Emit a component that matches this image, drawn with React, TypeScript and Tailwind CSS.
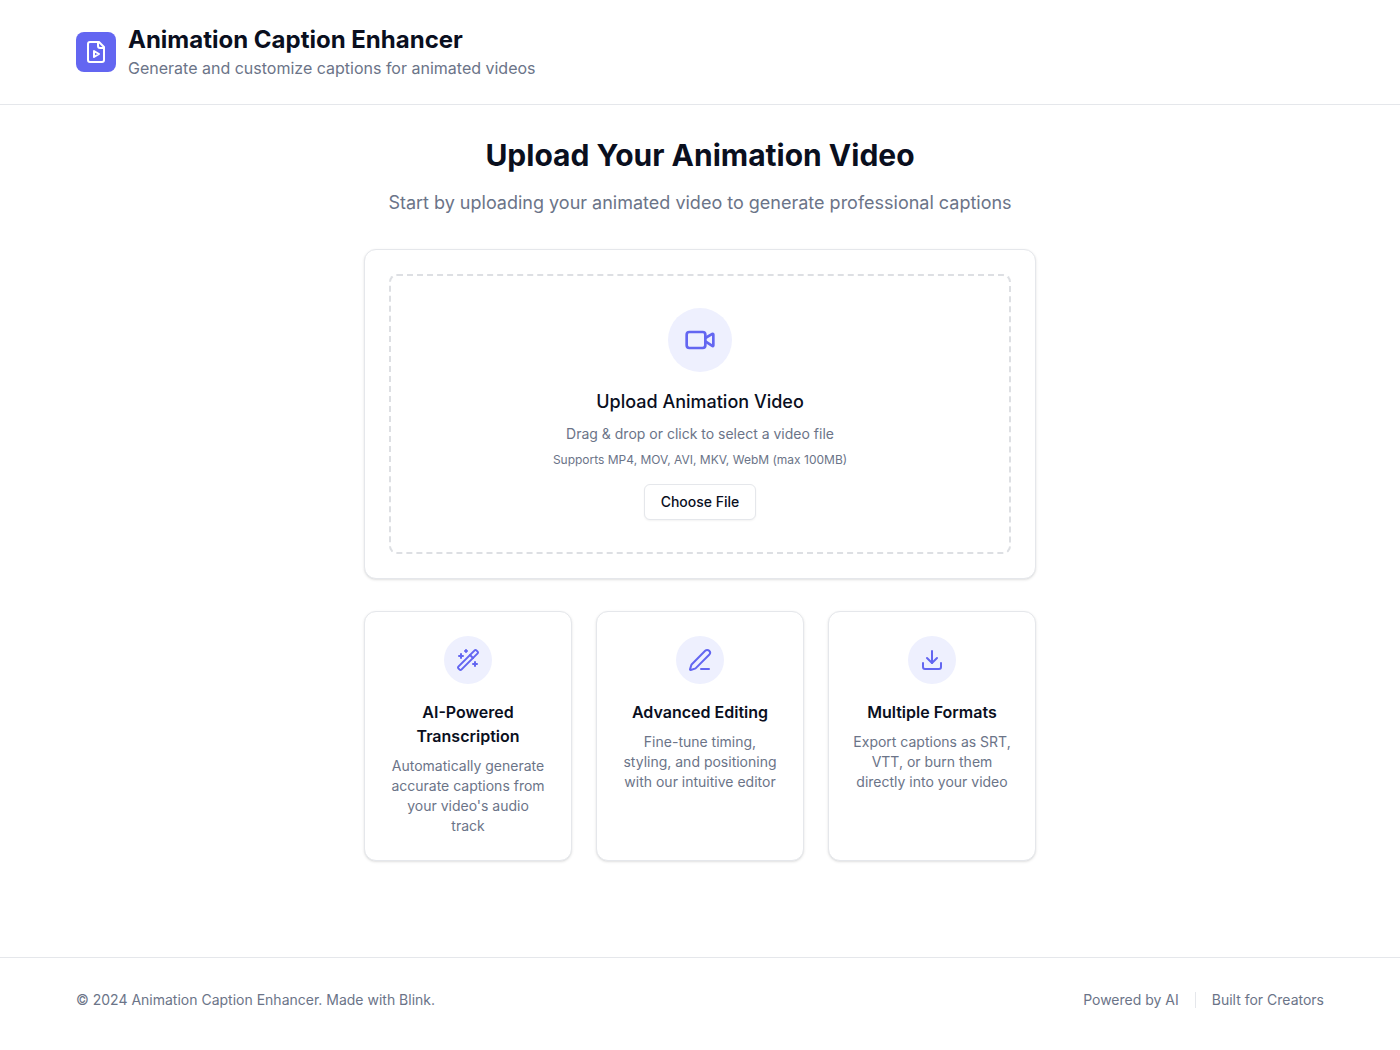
import { Download, PenLine, Video, WandSparkles } from "lucide-react";

const features = [
  {
    title: "AI-Powered Transcription",
    description: "Automatically generate accurate captions from your video's audio track",
    icon: <WandSparkles className="w-6 h-6 text-[#6366f1]" strokeWidth={2} />,
  },
  {
    title: "Advanced Editing",
    description: "Fine-tune timing, styling, and positioning with our intuitive editor",
    icon: <PenLine className="w-6 h-6 text-[#6366f1]" strokeWidth={2} />,
  },
  {
    title: "Multiple Formats",
    description: "Export captions as SRT, VTT, or burn them directly into your video",
    icon: <Download className="w-6 h-6 text-[#6366f1]" strokeWidth={2} />,
  },
];

export default function App() {
  return (
    <div className="min-h-screen bg-white text-[#0a0f1e] antialiased font-['Inter',sans-serif]">
      <header className="border-b border-[#e5e7eb]">
        <div className="max-w-[1280px] mx-auto px-4 py-6 flex items-center gap-3">
          <div className="w-10 h-10 rounded-lg bg-[#6366f1] flex items-center justify-center">
            <svg
              viewBox="0 0 24 24"
              className="w-6 h-6 text-white"
              fill="none"
              stroke="currentColor"
              strokeWidth={2}
              strokeLinecap="round"
              strokeLinejoin="round"
            >
              <path d="M15 2H6a2 2 0 0 0-2 2v16a2 2 0 0 0 2 2h12a2 2 0 0 0 2-2V7Z" />
              <path d="M14 2v4a2 2 0 0 0 2 2h4" />
              <path d="m10 11 5 3-5 3v-6Z" />
            </svg>
          </div>
          <div>
            <h1 className="text-2xl font-bold">Animation Caption Enhancer</h1>
            <p className="text-base text-[#6b7488]">Generate and customize captions for animated videos</p>
          </div>
        </div>
      </header>

      <main className="max-w-[704px] mx-auto px-4 pt-8 pb-8 mb-16">
        <div className="text-center mb-8">
          <h2 className="text-3xl font-bold mb-4">Upload Your Animation Video</h2>
          <p className="text-lg text-[#6b7488]">Start by uploading your animated video to generate professional captions</p>
        </div>

        <div className="bg-white border border-[#e5e7eb] rounded-xl shadow-sm p-6 mb-8">
          <div className="border-2 border-dashed border-[#dddfe3] rounded-lg p-8 text-center">
            <div className="w-16 h-16 rounded-full bg-[#eef0fe] flex items-center justify-center mx-auto mb-4">
              <Video className="w-8 h-8 text-[#6366f1]" strokeWidth={2} />
            </div>
            <h3 className="text-lg font-medium mb-2">Upload Animation Video</h3>
            <p className="text-sm text-[#6b7488] mb-2">Drag &amp; drop or click to select a video file</p>
            <p className="text-xs text-[#6b7488] mb-4">Supports MP4, MOV, AVI, MKV, WebM (max 100MB)</p>
            <button className="h-9 px-4 rounded-md border border-[#e5e7eb] bg-white text-sm font-medium shadow-xs">
              Choose File
            </button>
          </div>
        </div>

        <div className="grid grid-cols-3 gap-6">
          {features.map((f) => (
            <div key={f.title} className="bg-white border border-[#e5e7eb] rounded-xl shadow-sm p-6 text-center">
              <div className="w-12 h-12 rounded-full bg-[#eef0fe] flex items-center justify-center mx-auto mb-4">
                {f.icon}
              </div>
              <h4 className="text-base font-semibold mb-2">{f.title}</h4>
              <p className="text-sm text-[#6b7488]">{f.description}</p>
            </div>
          ))}
        </div>
      </main>

      <footer className="border-t border-[#e5e7eb]">
        <div className="max-w-[1280px] mx-auto px-4 py-8 flex items-center justify-between text-sm text-[#6b7488]">
          <p>© 2024 Animation Caption Enhancer. Made with Blink.</p>
          <div className="flex items-center gap-4">
            <span>Powered by AI</span>
            <div className="w-px h-4 bg-[#e5e7eb]" />
            <span>Built for Creators</span>
          </div>
        </div>
      </footer>
    </div>
  );
}
